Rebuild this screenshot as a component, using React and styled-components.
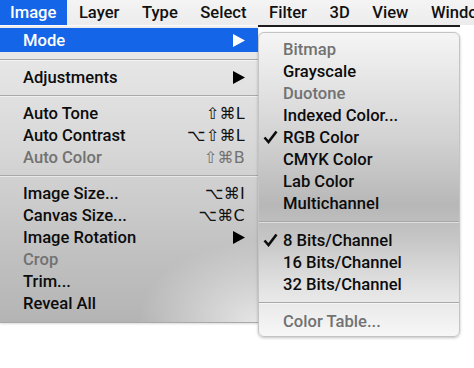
import React from "react"
import styled, { createGlobalStyle } from "styled-components"

const Global = createGlobalStyle`
  html, body { margin: 0; padding: 0; background: #fff; }
  body { font-family: Roboto, "Liberation Sans", "DejaVu Sans", sans-serif; }
`

const Screen = styled.div`
  width: 474px;
  height: 368px;
  overflow: hidden;
  background: #fff;
`

const MenuBar = styled.div`
  display: flex;
  height: 25px;
  background: linear-gradient(#f4f4f4, #ececec);
`

const BarItem = styled.div`
  padding: 0 11px 0 ${(p) => (p.first ? 10 : 11.5)}px;
  display: flex;
  align-items: center;
  font-size: 16.6px;
  font-weight: 500;
  color: ${(p) => (p.active ? "#fff" : "#111")};
  background: ${(p) => (p.active ? "#1565e8" : "transparent")};
  white-space: nowrap;
`

const Body = styled.div`
  display: flex;
  align-items: flex-start;
`

const MainMenu = styled.div`
  width: 258px;
  margin-top: 1px;
  padding: 2px 0 8px;
  background:
    radial-gradient(ellipse 120px 80px at 100% 100%, rgba(235,235,235,0.9), rgba(235,235,235,0)),
    linear-gradient(#ececec 0%, #d8d8d8 40%, #c2c2c2 75%, #b4b4b4 100%);
  border-bottom: 1px solid #a9a9a9;
  box-shadow: 0 1px 2px rgba(0,0,0,0.15);
`

const SubColumn = styled.div`
  width: 202px;
  border-top: 2px solid #1d1d1d;
  padding-top: 5px;
`

const SubMenu = styled.div`
  height: 292px;
  padding: 5px 0 6px;
  border: 1px solid #c4c4c4;
  border-radius: 6px;
  background: linear-gradient(#f5f5f5 0%, #d2d2d2 35%, #b7b7b7 57%, #c6c6c6 68%, #e4e4e4 85%, #f7f7f7 100%);
  box-shadow: 0 1px 3px rgba(0,0,0,0.25);
`

const Row = styled.div`
  position: relative;
  display: flex;
  align-items: center;
  height: ${(p) => (p.tall ? 24 : 22)}px;
  padding: 0 13px 0 ${(p) => (p.sub ? 24 : 23)}px;
  font-size: 16.6px;
  font-weight: 500;
  color: ${(p) => (p.active ? "#fff" : p.disabled ? "#727272" : "#0c0c0c")};
  background: ${(p) => (p.active ? "#1565e8" : "transparent")};
  white-space: nowrap;
`

const Label = styled.span`
  flex: 1;
`

const Check = styled.svg`
  position: absolute;
  left: 4px;
  top: 4px;
`

const Keys = styled.span`
  font-family: "DejaVu Sans", sans-serif;
  font-size: 16px;
  letter-spacing: 0.3px;
  color: ${(p) => (p.disabled ? "#727272" : "#111")};
`

const Sep = styled.div`
  height: ${(p) => p.h}px;
  display: flex;
  align-items: center;
  &::after {
    content: "";
    flex: 1;
    height: 1px;
    background: #a8a8a8;
    box-shadow: 0 1px 0 rgba(255,255,255,0.5);
  }
`

const Arrow = ({ color }) => (
  <svg width="12" height="13" viewBox="0 0 12 13">
    <polygon points="0,0 12,6.5 0,13" fill={color} />
  </svg>
)

const Tick = () => (
  <Check width="15" height="14" viewBox="0 0 15 14">
    <path d="M1.5 7.5 L5.5 12 L13.5 1.5" fill="none" stroke="#0c0c0c" strokeWidth="2.6" strokeLinejoin="miter" />
  </Check>
)

const bar = ["Image", "Layer", "Type", "Select", "Filter", "3D", "View", "Window"]

export default function App() {
  return (
    <Screen>
      <Global />
      <MenuBar>
        {bar.map((b, i) => (
          <BarItem key={b} first={i === 0} active={i === 0}>{b}</BarItem>
        ))}
      </MenuBar>
      <Body>
        <MainMenu>
          <Row tall active><Label>Mode</Label><Arrow color="#fff" /></Row>
          <Sep h={14} />
          <Row><Label>Adjustments</Label><Arrow color="#000" /></Row>
          <Sep h={14} />
          <Row><Label>Auto Tone</Label><Keys>⇧⌘L</Keys></Row>
          <Row><Label>Auto Contrast</Label><Keys>⌥⇧⌘L</Keys></Row>
          <Row disabled><Label>Auto Color</Label><Keys disabled>⇧⌘B</Keys></Row>
          <Sep h={14} />
          <Row><Label>Image Size...</Label><Keys>⌥⌘I</Keys></Row>
          <Row><Label>Canvas Size...</Label><Keys>⌥⌘C</Keys></Row>
          <Row><Label>Image Rotation</Label><Arrow color="#000" /></Row>
          <Row disabled><Label>Crop</Label></Row>
          <Row><Label>Trim...</Label></Row>
          <Row><Label>Reveal All</Label></Row>
        </MainMenu>
        <SubColumn>
          <SubMenu>
            <Row sub disabled><Label>Bitmap</Label></Row>
            <Row sub><Label>Grayscale</Label></Row>
            <Row sub disabled><Label>Duotone</Label></Row>
            <Row sub><Label>Indexed Color...</Label></Row>
            <Row sub><Tick /><Label>RGB Color</Label></Row>
            <Row sub><Label>CMYK Color</Label></Row>
            <Row sub><Label>Lab Color</Label></Row>
            <Row sub><Label>Multichannel</Label></Row>
            <Sep h={15} />
            <Row sub><Tick /><Label>8 Bits/Channel</Label></Row>
            <Row sub><Label>16 Bits/Channel</Label></Row>
            <Row sub><Label>32 Bits/Channel</Label></Row>
            <Sep h={15} />
            <Row sub disabled><Label>Color Table...</Label></Row>
          </SubMenu>
        </SubColumn>
      </Body>
    </Screen>
  )
}
